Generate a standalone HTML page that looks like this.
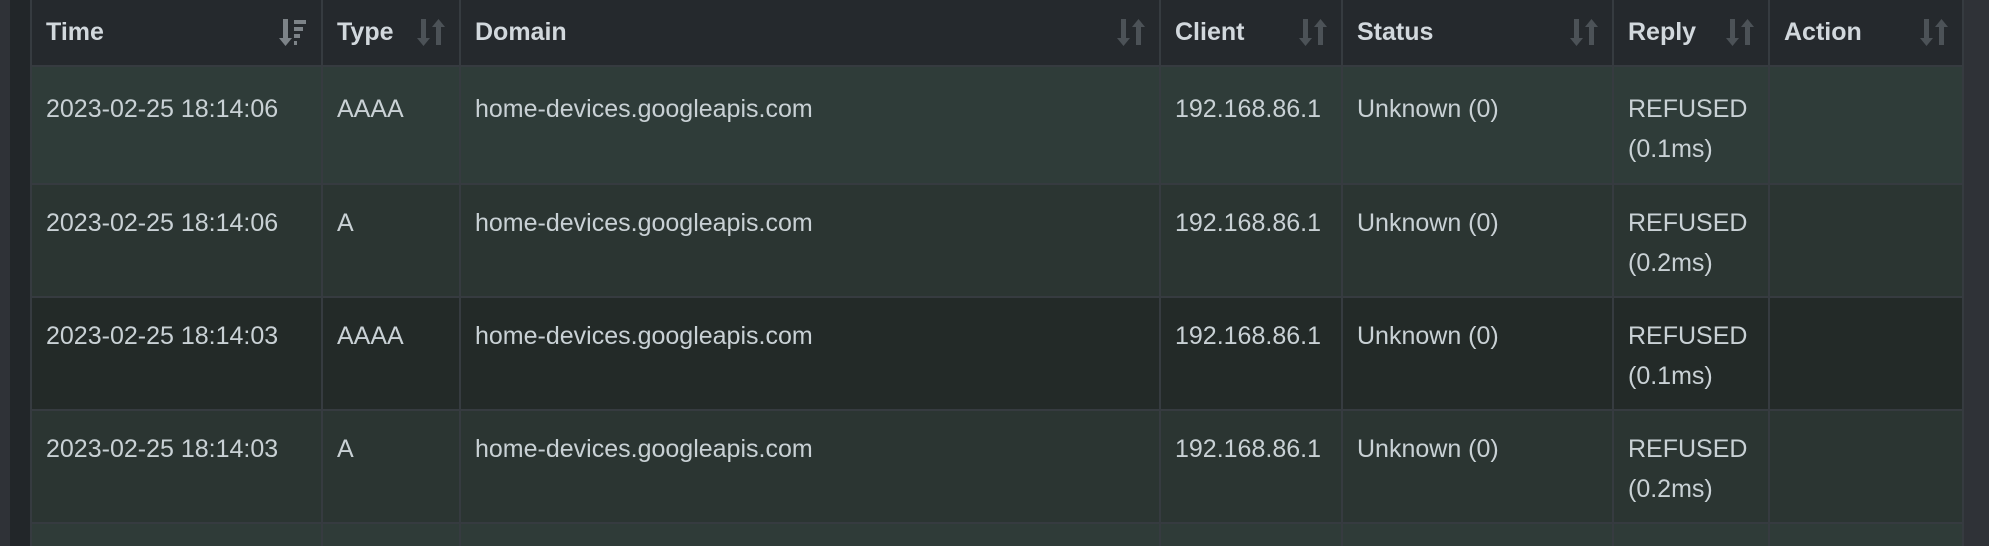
<!DOCTYPE html>
<html><head><style>
html,body{margin:0;padding:0;width:1989px;height:546px;overflow:hidden;background:#222629;}
.lstrip{position:absolute;left:0;top:0;width:10px;height:546px;background:#2f3237;}
.rstrip{position:absolute;left:1964px;top:0;width:25px;height:546px;background:#2f3237;}
table{position:absolute;left:30px;top:0;border-collapse:collapse;table-layout:fixed;width:1932px;font-family:"Liberation Sans",sans-serif;font-size:25px;color:#c9d1d5;}
td,th{border:2px solid #363b40;padding:0 14px;text-align:left;vertical-align:top;position:relative;}
th{background:#25292d;height:66px;font-weight:bold;color:#d2d8dd;vertical-align:middle;box-sizing:border-box;border-top:none;}
td{line-height:40px;padding-top:18px;box-sizing:border-box;}
tr.r1{height:118px;} tr.r1 td{background:#2f3c39;padding-top:22px;}
tr.r2{height:113px;} tr.r2 td{background:#2b3532;}
tr.r3{height:113px;} tr.r3 td{background:#232a28;}
tr.r4{height:113px;} tr.r4 td{background:#2b3532;}
tr.r5{height:23px;} tr.r5 td{background:#2f3b38;padding:0;border-bottom:none;}
th svg{position:absolute;right:14px;top:17px;}
</style></head><body>
<div class="lstrip"></div><div class="rstrip"></div>
<table>
<colgroup><col style="width:291px"><col style="width:138px"><col style="width:700px"><col style="width:182px"><col style="width:271px"><col style="width:156px"><col style="width:194px"></colgroup>
<tr style="height:66px">
<th>Time<svg width="28" height="30" viewBox="0 0 28 30"><path d="M4 2h5v19h4l-6.5 8L0 21h4z" fill="#7d8388"/><path d="M15 3h12v4H15zM15 10h9v4h-9zM15 17h6v4h-6zM15 24h3v4h-3z" fill="#7d8388"/></svg></th>
<th>Type<svg width="28" height="30" viewBox="0 0 28 30"><path d="M4 2h5v19h4l-6.5 8L0 21h4z" fill="#4c5257"/><path d="M19 9h5v19h-5zM15 10l6.5-8 6.5 8z" fill="#4c5257"/></svg></th>
<th>Domain<svg width="28" height="30" viewBox="0 0 28 30"><path d="M4 2h5v19h4l-6.5 8L0 21h4z" fill="#4c5257"/><path d="M19 9h5v19h-5zM15 10l6.5-8 6.5 8z" fill="#4c5257"/></svg></th>
<th>Client<svg width="28" height="30" viewBox="0 0 28 30"><path d="M4 2h5v19h4l-6.5 8L0 21h4z" fill="#4c5257"/><path d="M19 9h5v19h-5zM15 10l6.5-8 6.5 8z" fill="#4c5257"/></svg></th>
<th>Status<svg width="28" height="30" viewBox="0 0 28 30"><path d="M4 2h5v19h4l-6.5 8L0 21h4z" fill="#4c5257"/><path d="M19 9h5v19h-5zM15 10l6.5-8 6.5 8z" fill="#4c5257"/></svg></th>
<th>Reply<svg width="28" height="30" viewBox="0 0 28 30"><path d="M4 2h5v19h4l-6.5 8L0 21h4z" fill="#4c5257"/><path d="M19 9h5v19h-5zM15 10l6.5-8 6.5 8z" fill="#4c5257"/></svg></th>
<th>Action<svg width="28" height="30" viewBox="0 0 28 30"><path d="M4 2h5v19h4l-6.5 8L0 21h4z" fill="#4c5257"/><path d="M19 9h5v19h-5zM15 10l6.5-8 6.5 8z" fill="#4c5257"/></svg></th>
</tr>
<tr class="r1"><td>2023-02-25 18:14:06</td><td>AAAA</td><td>home-devices.googleapis.com</td><td>192.168.86.1</td><td>Unknown (0)</td><td>REFUSED<br>(0.1ms)</td><td></td></tr>
<tr class="r2"><td>2023-02-25 18:14:06</td><td>A</td><td>home-devices.googleapis.com</td><td>192.168.86.1</td><td>Unknown (0)</td><td>REFUSED<br>(0.2ms)</td><td></td></tr>
<tr class="r3"><td>2023-02-25 18:14:03</td><td>AAAA</td><td>home-devices.googleapis.com</td><td>192.168.86.1</td><td>Unknown (0)</td><td>REFUSED<br>(0.1ms)</td><td></td></tr>
<tr class="r4"><td>2023-02-25 18:14:03</td><td>A</td><td>home-devices.googleapis.com</td><td>192.168.86.1</td><td>Unknown (0)</td><td>REFUSED<br>(0.2ms)</td><td></td></tr>
<tr class="r5"><td></td><td></td><td></td><td></td><td></td><td></td><td></td></tr>
</table>
</body></html>
